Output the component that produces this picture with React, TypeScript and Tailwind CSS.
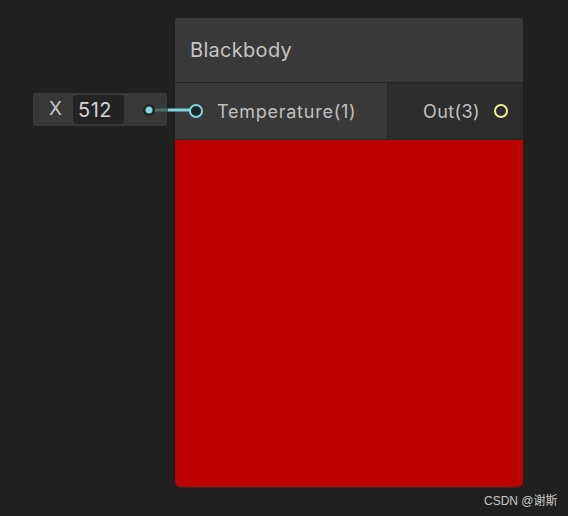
export default function App() {
  return (
    <div
      className="relative w-[568px] h-[516px] overflow-hidden bg-[#202020]"
      style={{ fontFamily: "Inter, 'Noto Sans', sans-serif" }}
    >
      {/* inline value field */}
      <div className="absolute left-[33px] top-[93px] flex h-[33px] w-[134px] items-center rounded-[2px] bg-[#383838]">
        <span className="ml-[16px] w-[13px] text-[19px] text-[#c8c8c8]">X</span>
        <div className="ml-[11px] flex h-[29px] w-[51px] items-center rounded-[4px] bg-[#232323] pl-[5px] text-[20px] tracking-[0.5px] text-[#d4d4d4]">
          512
        </div>
      </div>

      {/* node */}
      <div className="absolute left-[175px] top-[18px] flex h-[470px] w-[348px] flex-col overflow-hidden rounded-[3px] rounded-b-[6px] bg-[#2b2b2b]">
        <div className="flex h-[64px] items-center bg-[#393939] px-[15px] text-[20px] tracking-[0.3px] text-[#c4c4c4]">
          Blackbody
        </div>
        <div className="h-px bg-[#252525]" />
        <div className="flex h-[56px]">
          <div className="relative flex w-[213px] items-center border-r border-[#262626] bg-[#393939] text-[18px] tracking-[0.75px] text-[#c0c0c0]">
            <div className="ml-[14px] h-[14px] w-[14px] rounded-full border-2 border-[#7ad7de] bg-[#232323]" />
            <span className="ml-[14px]">Temperature(1)</span>
          </div>
          <div className="flex flex-1 items-center justify-end bg-[#2d2d2d] pr-[15px] text-[18px] tracking-[0.4px] text-[#c0c0c0]">
            <span>Out(3)</span>
            <div className="ml-[14px] h-[14px] w-[14px] rounded-full border-2 border-[#eef08a] bg-[#2d2d2d]" />
          </div>
        </div>
        <div className="h-px bg-[#252525]" />
        <div className="mb-px flex-1 rounded-b-[6px] bg-[#bb0000]" />
      </div>

      {/* wire, drawn over the node edge */}
      <svg className="absolute left-[140px] top-[100px] z-10" width="52" height="20" viewBox="0 0 52 20">
        <line x1="14" y1="10" x2="28" y2="10" stroke="#4b6b6c" strokeWidth="3" />
        <line x1="28" y1="10" x2="51" y2="10" stroke="#7ad7de" strokeWidth="3" />
        <circle cx="9" cy="10" r="6" fill="#232323" />
        <circle cx="9" cy="10" r="3.5" fill="#7ad7de" />
      </svg>

      <div
        className="absolute left-[484px] top-[492px] text-[12px] text-[#c8c8c8]"
        style={{ fontFamily: "'Liberation Sans', 'Noto Sans CJK SC', sans-serif" }}
      >
        CSDN @谢斯
      </div>
    </div>
  );
}
